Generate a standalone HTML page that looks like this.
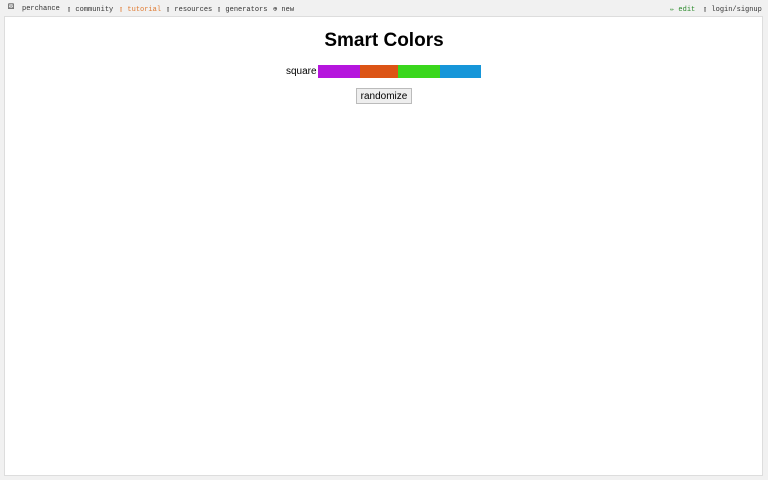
<!DOCTYPE html>
<html><head><style>
body{margin:0;background:#f1f1f1;width:768px;height:480px;overflow:hidden;font-family:"Liberation Sans",sans-serif;}
.nav{position:absolute;top:0;left:0;right:0;height:16px;font-family:"Liberation Mono",monospace;font-size:7px;color:#333;}
.nav span{position:absolute;top:5px;white-space:nowrap}
.main{position:absolute;left:4px;top:16px;width:757px;height:458px;background:#fff;border:1px solid #ddd;}
h1{position:absolute;left:0;right:0;top:30px;margin:0;text-align:center;font-size:19px;font-weight:bold;color:#000}
.sw{position:absolute;top:65px;height:13px}
.btn{position:absolute;left:356px;top:88px;width:54px;height:14px;background:#eee;border:1px solid #bbb;font-size:10px;text-align:center;line-height:16px;color:#000}
</style></head><body>
<div class="nav">
<span style="left:8px;font-size:10px;top:1px">⚄</span>
<span style="left:22px">perchance</span>
<span style="left:67px">▯ community</span>
<span style="left:119px;color:#e07a30">▯ tutorial</span>
<span style="left:166px">▯ resources</span>
<span style="left:217px">▯ generators</span>
<span style="left:273px">⊕ new</span>
<span style="left:670px;color:#2a8a2a">✏ edit</span>
<span style="left:703px">▯ login/signup</span>
</div>
<div class="main"></div>
<h1>Smart Colors</h1>
<div style="position:absolute;left:286px;top:66px;font-size:10px;color:#000">square</div>
<div class="sw" style="left:318px;width:42px;background:#b515dd"></div>
<div class="sw" style="left:360px;width:38px;background:#dc5415"></div>
<div class="sw" style="left:398px;width:42px;background:#3ad71d"></div>
<div class="sw" style="left:440px;width:41px;background:#1696d9"></div>
<div class="btn">randomize</div>
</body></html>
